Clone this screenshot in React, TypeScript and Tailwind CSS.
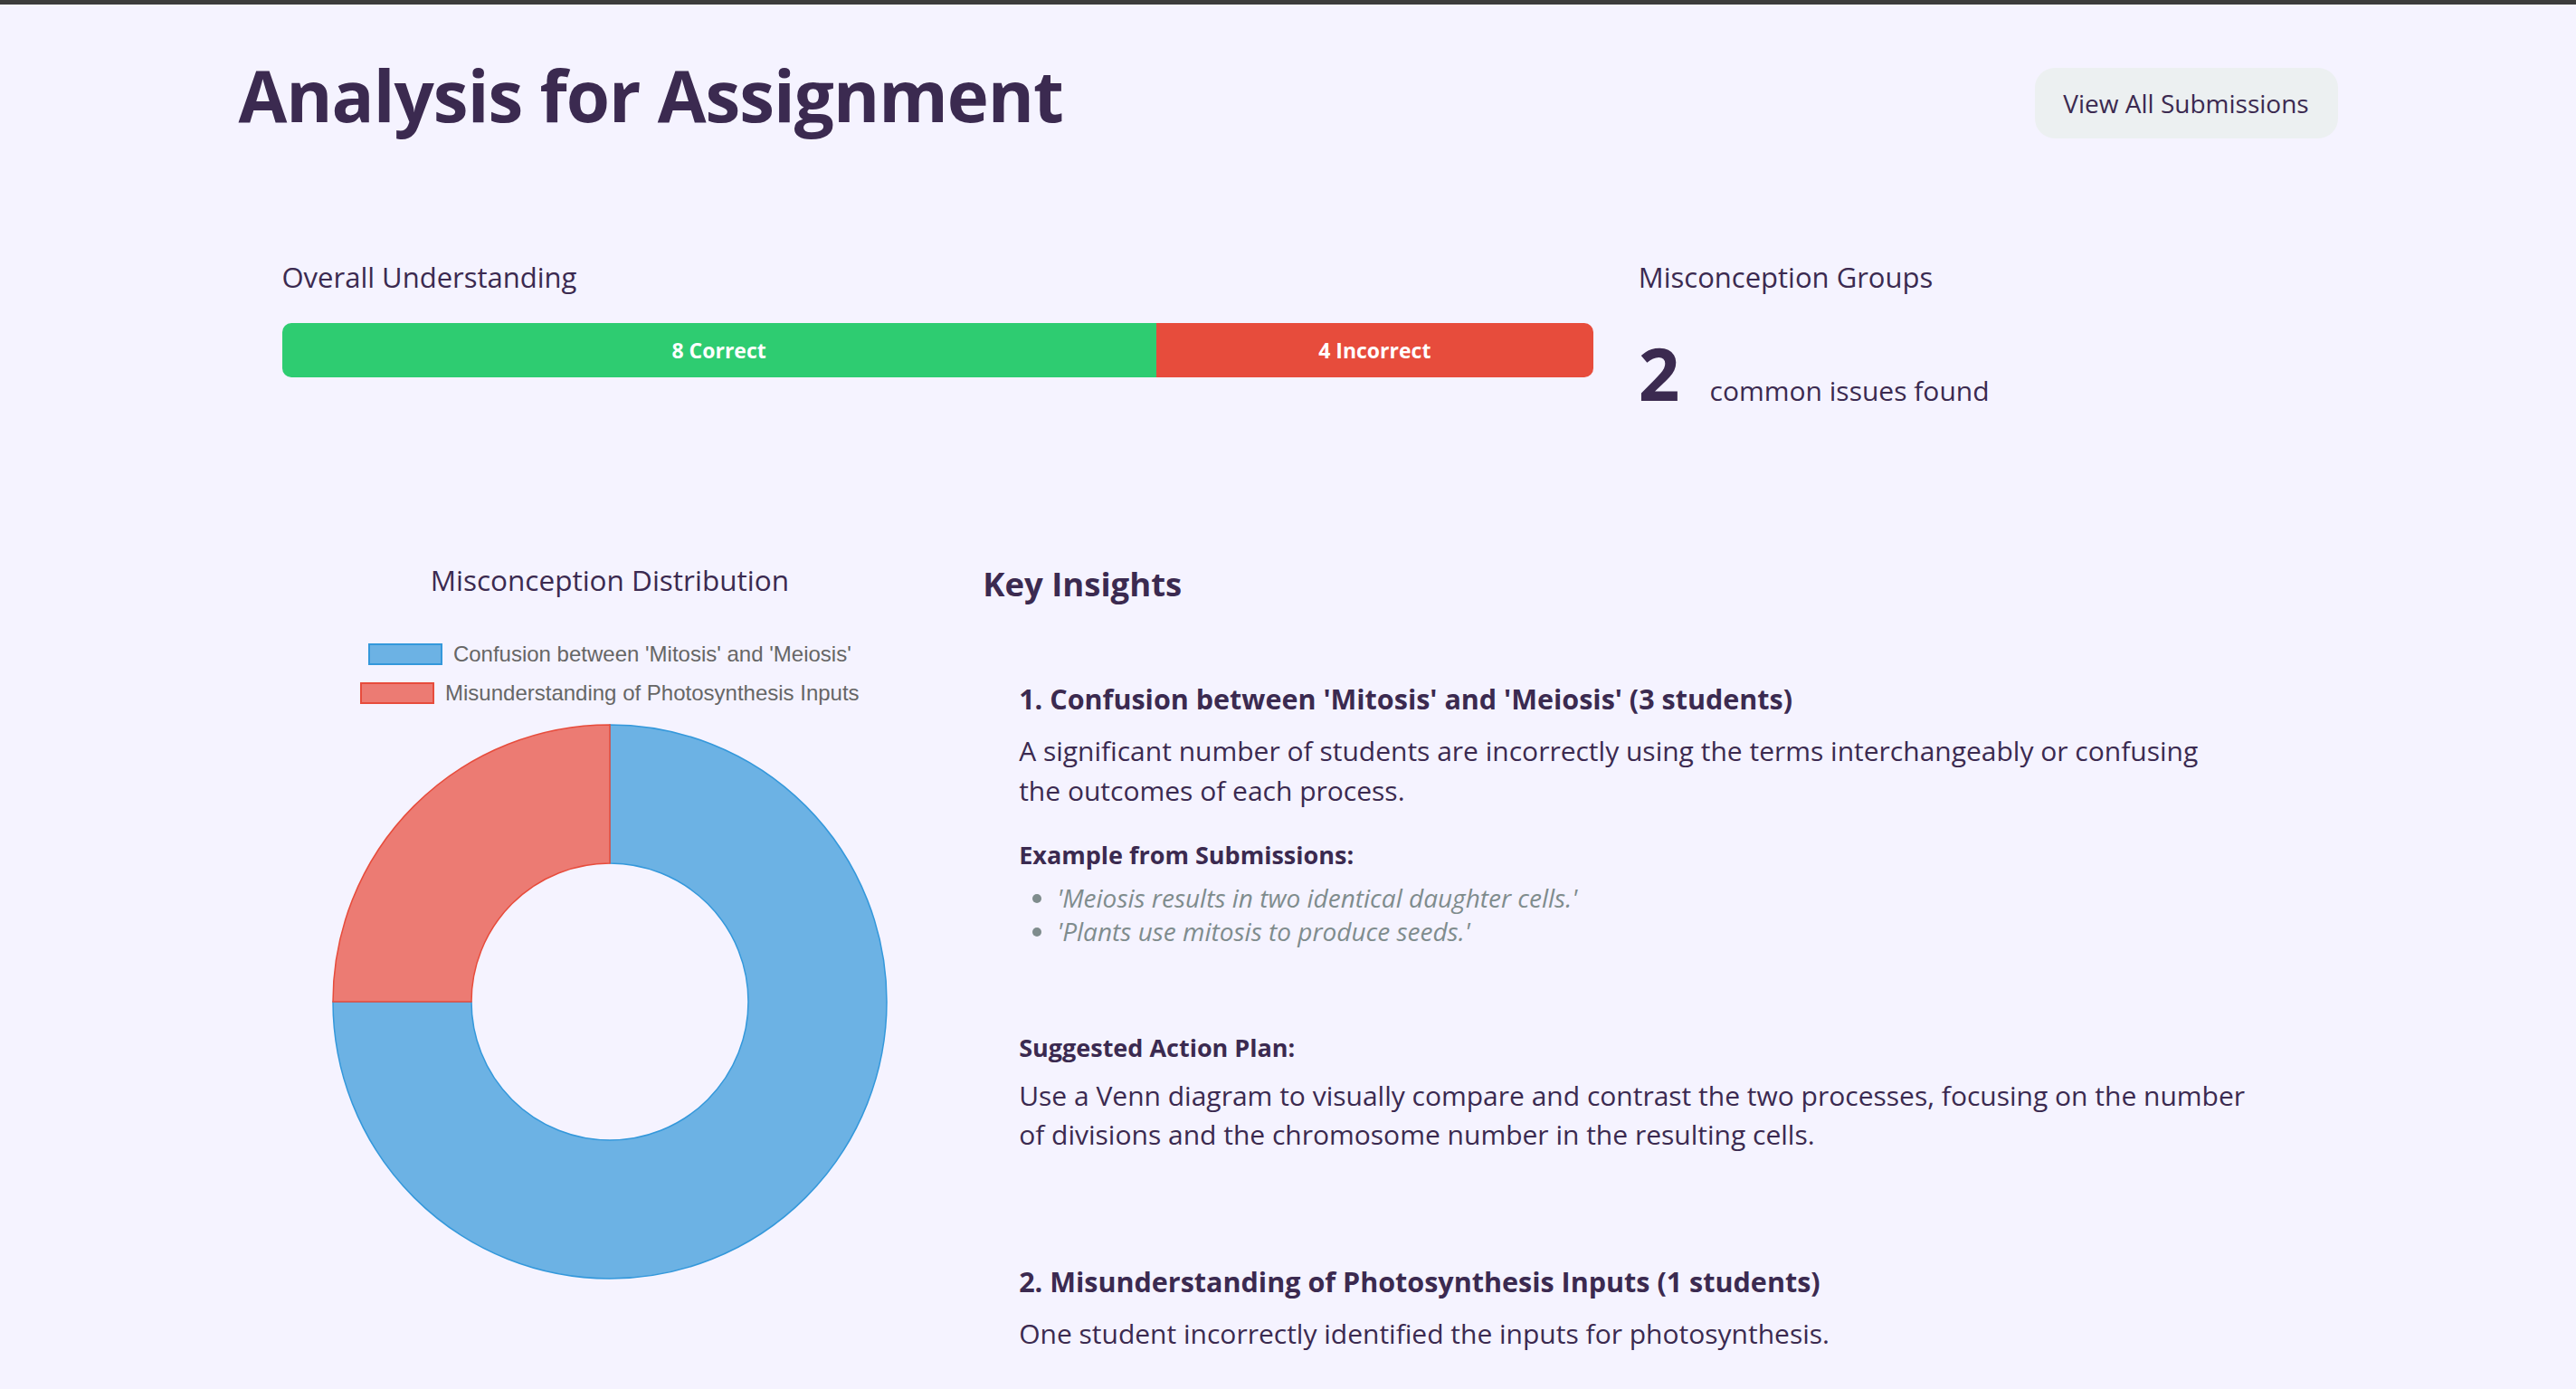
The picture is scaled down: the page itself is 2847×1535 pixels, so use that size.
const insights = [
  {
    title: "1. Confusion between 'Mitosis' and 'Meiosis' (3 students)",
    description:
      'A significant number of students are incorrectly using the terms interchangeably or confusing the outcomes of each process.',
    examples: ["'Meiosis results in two identical daughter cells.'", "'Plants use mitosis to produce seeds.'"],
    plan: 'Use a Venn diagram to visually compare and contrast the two processes, focusing on the number of divisions and the chromosome number in the resulting cells.',
  },
  {
    title: '2. Misunderstanding of Photosynthesis Inputs (1 students)',
    description: 'One student incorrectly identified the inputs for photosynthesis.',
    examples: ["'Plants take in oxygen to make glucose.'"],
    plan: 'Review the photosynthesis equation with a labelled diagram of inputs and outputs.',
  },
]

const legend = [
  { label: "Confusion between 'Mitosis' and 'Meiosis'", fill: 'bg-[#6cb2e4]', border: 'border-[#3498db]' },
  { label: 'Misunderstanding of Photosynthesis Inputs', fill: 'bg-[#ec7b73]', border: 'border-[#e74c3c]' },
]

function App() {
  return (
    <main
      className="min-h-screen overflow-hidden border-t-[5px] border-[#3c3c3c] bg-[#f5f3ff] text-[#3b2a50]"
      style={{ fontFamily: '"Open Sans", "Noto Sans", sans-serif' }}
    >
      <div className="mx-auto w-[2320px]">
        <header className="flex items-start justify-between pt-[58px]">
          <h1 className="text-[78px] font-bold leading-[1.1] tracking-[-1px]">Analysis for Assignment</h1>
          <button
            type="button"
            className="mt-[12px] h-[78px] w-[335px] rounded-[22px] bg-[#ecf0f1] text-[28px] font-medium text-[#3b2a50]"
          >
            View All Submissions
          </button>
        </header>

        <section className="mt-[135px] grid grid-cols-[2fr_1fr] gap-[50px] px-[48px]">
          <div>
            <h3 className="text-[31px] font-medium leading-[37px]">Overall Understanding</h3>
            <div className="mt-[32px] flex h-[60px] overflow-hidden rounded-[10px] text-[23px] font-bold text-white">
              <div className="flex flex-[8] items-center justify-center bg-[#2ecc71]">8 Correct</div>
              <div className="flex flex-[4] items-center justify-center bg-[#e74c3c]">4 Incorrect</div>
            </div>
          </div>
          <div>
            <h3 className="text-[31px] font-medium leading-[37px]">Misconception Groups</h3>
            <p className="mt-[47px] flex items-baseline gap-[33px]">
              <span className="text-[80px] font-bold leading-none">2</span>
              <span className="text-[30px] leading-[1.5]">common issues found</span>
            </p>
          </div>
        </section>

        <section className="mt-[168px] grid grid-cols-[1fr_2fr] gap-[50px] px-[48px]">
          <div className="flex flex-col items-center">
            <h3 className="mt-[1px] text-[31.5px] font-medium leading-[36px]">Misconception Distribution</h3>
            <ul
              className="mt-[52px] flex flex-col items-center gap-[19px] text-[24px] text-[#666]"
              style={{ fontFamily: '"Liberation Sans", Arial, sans-serif' }}
            >
              {legend.map((item) => (
                <li key={item.label} className="flex h-[24px] items-center gap-[12px] leading-none">
                  <span className={`h-[24px] w-[82px] border-2 ${item.fill} ${item.border}`} />
                  {item.label}
                </li>
              ))}
            </ul>
            <DonutChart />
          </div>

          <div>
            <h2 className="text-[36.5px] font-bold leading-[46px]">Key Insights</h2>
            <div className="mt-[85px] space-y-[122px] px-[40px]">
              {insights.map((insight) => (
                <article key={insight.title}>
                  <h4 className="text-[30.5px] font-bold leading-[39px]">{insight.title}</h4>
                  <p className="mt-[16px] pr-[20px] text-[30px] leading-[44px]">{insight.description}</p>
                  <h5 className="mt-[31px] text-[27px] font-bold leading-[35px]">Example from Submissions:</h5>
                  <ul className="mt-[12px] list-disc pl-[42px] text-[28px] italic leading-[37px] text-[#7f8c8d] marker:text-[#7f8c8d]">
                    {insight.examples.map((example) => (
                      <li key={example}>{example}</li>
                    ))}
                  </ul>
                  <h5 className="mt-[92px] text-[27px] font-bold leading-[35px]">Suggested Action Plan:</h5>
                  <p className="mt-[14px] text-[30px] leading-[43px]">{insight.plan}</p>
                </article>
              ))}
            </div>
          </div>
        </section>
      </div>
    </main>
  )
}

function DonutChart() {
  return (
    <svg className="mt-[21px]" width={616} height={616} viewBox="-2 -2 616 616" aria-hidden>
      <path
        d="M 306 0 A 306 306 0 1 1 0 306 L 153 306 A 153 153 0 1 0 306 153 Z"
        fill="#6cb2e4"
        stroke="#3498db"
        strokeWidth={1.5}
      />
      <path
        d="M 0 306 A 306 306 0 0 1 306 0 L 306 153 A 153 153 0 0 0 153 306 Z"
        fill="#ec7b73"
        stroke="#e74c3c"
        strokeWidth={1.5}
      />
    </svg>
  )
}

export default App
